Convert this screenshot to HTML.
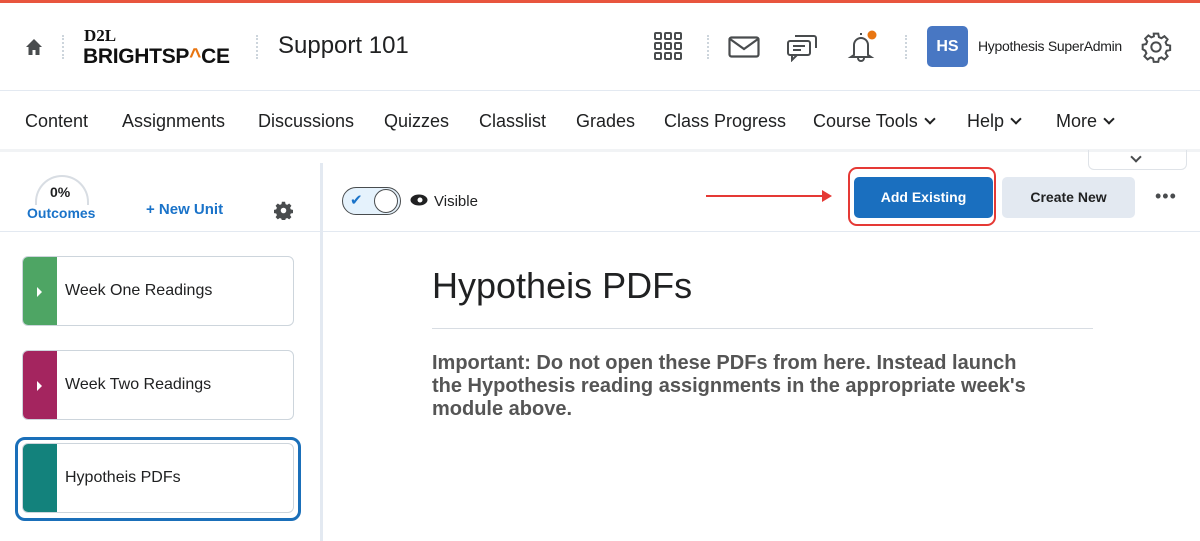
<!DOCTYPE html>
<html><head><meta charset="utf-8"><style>
*{box-sizing:border-box;margin:0;padding:0}
body{width:1200px;height:541px;overflow:hidden;background:#fff;font-family:"Liberation Sans",sans-serif;color:#202122;position:relative}
.a{position:absolute}
.nav span{position:absolute;top:111px;font-size:18px;color:#202122}
.sep{position:absolute;width:0;height:24px;border-left:2px dotted #cdd5dc}
.card{position:absolute;left:22px;width:272px;height:70px;border:1px solid #cdd5dc;border-radius:6px;overflow:hidden;background:#fff}
.card .bar{position:absolute;left:0;top:0;bottom:0;width:34px}
.card .t{position:absolute;left:42px;top:25px;font-size:16px}
.card .tri{position:absolute;left:14px;top:30px;width:0;height:0;border-left:5px solid #fff;border-top:5px solid transparent;border-bottom:5px solid transparent}
.chev{display:inline-block;width:8px;height:8px;border-right:2.5px solid #202122;border-bottom:2.5px solid #202122;transform:rotate(45deg);margin-left:8px;position:relative;top:-4px}
</style></head><body>
<div class="a" style="left:0;top:0;width:1200px;height:3px;background:#e8553e"></div>
<svg class="a" style="left:25px;top:38px" width="18" height="18" viewBox="0 0 18 18"><path d="M9 1L1 9h2.5v8h4v-5h3v5h4V9H17z" fill="#494c4e"/></svg>
<div class="sep" style="left:62px;top:35px"></div>
<div class="a" style="left:84px;top:26px;font-family:'Liberation Serif',serif;font-weight:bold;font-size:17px;color:#111">D2L</div>
<div class="a" style="left:83px;top:45px;font-weight:bold;font-size:21px;letter-spacing:-0.3px;color:#111">BRIGHTSP<span style="color:#e87511">^</span>CE</div>
<div class="sep" style="left:256px;top:35px"></div>
<div class="a" style="left:278px;top:32px;font-size:24px;color:#202122">Support 101</div>
<svg class="a" style="left:654px;top:32px" width="28" height="28" viewBox="0 0 28 28" fill="none" stroke="#494c4e" stroke-width="2"><rect x="1" y="1" width="6" height="6" rx="1"/><rect x="11" y="1" width="6" height="6" rx="1"/><rect x="21" y="1" width="6" height="6" rx="1"/><rect x="1" y="11" width="6" height="6" rx="1"/><rect x="11" y="11" width="6" height="6" rx="1"/><rect x="21" y="11" width="6" height="6" rx="1"/><rect x="1" y="21" width="6" height="6" rx="1"/><rect x="11" y="21" width="6" height="6" rx="1"/><rect x="21" y="21" width="6" height="6" rx="1"/></svg>
<div class="sep" style="left:707px;top:35px"></div>
<svg class="a" style="left:728px;top:36px" width="32" height="22" viewBox="0 0 32 22" fill="none" stroke="#494c4e" stroke-width="2.2"><rect x="1.5" y="1.5" width="29" height="19" rx="2"/><path d="M2 3l14 10L30 3"/></svg>
<svg class="a" style="left:786px;top:30px" width="32" height="32" viewBox="0 0 32 32" fill="none" stroke="#494c4e" stroke-width="2"><path d="M9 6h19a2 2 0 0 1 2 2v10"/><rect x="2" y="11" width="22" height="14" rx="2"/><path d="M6 25v5l5-5"/><path d="M7 16h12M7 20h8"/></svg>
<svg class="a" style="left:846px;top:29px" width="32" height="34" viewBox="0 0 32 34" fill="none" stroke="#494c4e" stroke-width="2"><path d="M15 4v2M8 26V16a7 7 0 0 1 14 0v10l3 2H5z"/><path d="M12 29a3 3 0 0 0 6 0"/><circle cx="26" cy="6" r="4.5" fill="#e87511" stroke="none"/></svg>
<div class="sep" style="left:905px;top:35px"></div>
<div class="a" style="left:927px;top:26px;width:41px;height:41px;border-radius:5px;background:#4877c3;color:#fff;font-weight:bold;font-size:16px;text-align:center;line-height:41px">HS</div>
<div class="a" style="left:978px;top:38px;font-size:14px;letter-spacing:-0.3px;color:#202122">Hypothesis SuperAdmin</div>
<svg class="a" style="left:1140px;top:31px" width="32" height="32" viewBox="0 0 24 24" fill="none" stroke="#494c4e" stroke-width="1.5"><circle cx="12" cy="12" r="3.5"/><path d="M10.3 2h3.4l.5 2.6 1.9.8 2.2-1.5 2.4 2.4-1.5 2.2.8 1.9 2.6.5v3.4l-2.6.5-.8 1.9 1.5 2.2-2.4 2.4-2.2-1.5-1.9.8-.5 2.6h-3.4l-.5-2.6-1.9-.8-2.2 1.5-2.4-2.4 1.5-2.2-.8-1.9L2 13.7v-3.4l2.6-.5.8-1.9-1.5-2.2 2.4-2.4 2.2 1.5 1.9-.8z"/></svg>
<div class="a" style="left:0;top:90px;width:1200px;height:1px;background:#e3e9f1"></div>
<div class="nav">
<span style="left:25px">Content</span><span style="left:122px">Assignments</span><span style="left:258px">Discussions</span><span style="left:384px">Quizzes</span><span style="left:479px">Classlist</span><span style="left:576px">Grades</span><span style="left:664px">Class Progress</span><span style="left:813px">Course Tools<i class="chev"></i></span><span style="left:967px">Help<i class="chev"></i></span><span style="left:1056px">More<i class="chev"></i></span>
</div>
<div class="a" style="left:0;top:149px;width:1200px;height:3px;background:#f1f3f5"></div>
<div class="a" style="left:1088px;top:150px;width:99px;height:20px;border:1px solid #dfe3e8;border-top:none;border-radius:0 0 6px 6px"></div>
<i class="a" style="left:1132px;top:153px;width:8px;height:8px;border-right:2.5px solid #494c4e;border-bottom:2.5px solid #494c4e;transform:rotate(45deg)"></i>
<div class="a" style="left:35px;top:175px;width:54px;height:30px;border:2px solid #d8dde3;border-bottom:none;border-radius:30px 30px 0 0"></div>
<div class="a" style="left:50px;top:184px;font-size:14px;font-weight:bold">0%</div>
<div class="a" style="left:27px;top:205px;font-size:14px;color:#1a73c9;font-weight:bold">Outcomes</div>
<div class="a" style="left:146px;top:201px;font-size:15px;color:#1a73c9;font-weight:bold">+ New Unit</div>
<svg class="a" style="left:274px;top:201px" width="19" height="19" viewBox="0 0 24 24"><path fill="#494c4e" d="M10 1h4l.6 3 2 .9 2.6-1.7 2.8 2.8-1.7 2.6.9 2 3 .6v4l-3 .6-.9 2 1.7 2.6-2.8 2.8-2.6-1.7-2 .9-.6 3h-4l-.6-3-2-.9-2.6 1.7-2.8-2.8 1.7-2.6-.9-2-3-.6v-4l3-.6.9-2-1.7-2.6 2.8-2.8 2.6 1.7 2-.9zM12 8.5a3.5 3.5 0 1 0 0 7 3.5 3.5 0 0 0 0-7z"/></svg>
<div class="a" style="left:0;top:231px;width:320px;height:1px;background:#e3e9f1"></div>
<div class="a" style="left:320px;top:163px;width:3px;height:378px;background:#e3e9f1"></div>
<div class="card" style="top:256px"><div class="bar" style="background:#4ea564"></div><div class="tri"></div><div class="t">Week One Readings</div></div>
<div class="card" style="top:350px"><div class="bar" style="background:#a4255f"></div><div class="tri"></div><div class="t">Week Two Readings</div></div>
<div class="a" style="left:15px;top:437px;width:286px;height:84px;border:3px solid #1a6fb9;border-radius:10px"></div>
<div class="card" style="top:443px"><div class="bar" style="background:#13827c"></div><div class="t">Hypotheis PDFs</div></div>
<div class="a" style="left:342px;top:187px;width:59px;height:28px;border:1.5px solid #494c4e;border-radius:14px;background:#e5f2fc"></div>
<div class="a" style="left:350px;top:191px;font-size:15px;color:#1a73c9">✔</div>
<div class="a" style="left:374px;top:189px;width:24px;height:24px;border:1.5px solid #494c4e;border-radius:50%;background:#fff"></div>
<svg class="a" style="left:410px;top:194px" width="18" height="12" viewBox="0 0 18 12"><ellipse cx="9" cy="6" rx="8.5" ry="5.5" fill="#202122"/><circle cx="10" cy="6" r="2.5" fill="#fff"/></svg>
<div class="a" style="left:434px;top:193px;font-size:15px">Visible</div>
<div class="a" style="left:706px;top:195px;width:120px;height:2px;background:#e53935"></div>
<div class="a" style="left:822px;top:190px;width:0;height:0;border-left:10px solid #e53935;border-top:6px solid transparent;border-bottom:6px solid transparent"></div>
<div class="a" style="left:848px;top:167px;width:148px;height:59px;border:2px solid #e53935;border-radius:9px"></div>
<div class="a" style="left:854px;top:177px;width:139px;height:41px;border-radius:5px;background:#1a6fbf;color:#fff;font-weight:bold;font-size:14px;text-align:center;line-height:41px">Add Existing</div>
<div class="a" style="left:1002px;top:177px;width:133px;height:41px;border-radius:5px;background:#e3e9f1;color:#202122;font-weight:bold;font-size:14px;text-align:center;line-height:41px">Create New</div>
<div class="a" style="left:1155px;top:186px;font-size:18px;color:#494c4e;letter-spacing:1px">•••</div>
<div class="a" style="left:323px;top:231px;width:877px;height:1px;background:#e3e9f1"></div>
<div class="a" style="left:432px;top:265px;font-size:36px;color:#202122">Hypotheis PDFs</div>
<div class="a" style="left:432px;top:328px;width:661px;height:1px;background:#d8dde3"></div>
<div class="a" style="left:432px;top:352px;width:665px;font-size:20px;font-weight:bold;color:#555;line-height:23px">Important: Do not open these PDFs from here. Instead launch<br>the Hypothesis reading assignments in the appropriate week's<br>module above.</div>
</body></html>
